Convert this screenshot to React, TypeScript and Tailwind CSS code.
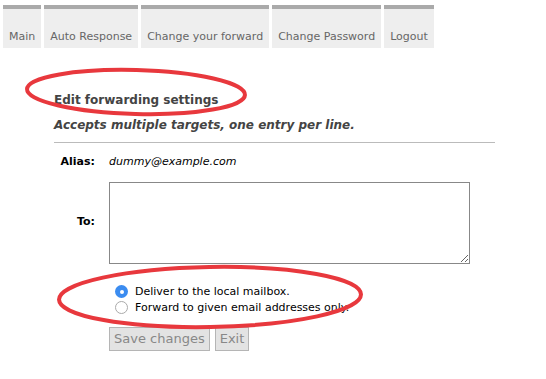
export default function App() {
  const tabs = ["Main", "Auto Response", "Change your forward", "Change Password", "Logout"];

  return (
    <div className="relative h-[379px] w-[546px] overflow-hidden bg-white font-['DejaVu_Sans',Verdana,sans-serif]">
      {/* Tabs */}
      <nav className="flex gap-[3px] pl-[3px] pt-[5px]">
        {tabs.map((t) => (
          <div
            key={t}
            className="flex h-[43px] items-end border-t-[4px] border-[#aaa] bg-[#eee] px-[6px] pb-[3px] text-[11px] text-[#666]"
          >
            {t}
          </div>
        ))}
      </nav>

      {/* Content */}
      <div className="ml-[54px] w-[441px] pt-[44px]">
        <h2 className="text-[12px] font-bold leading-[16px] text-[#444]">Edit forwarding settings</h2>
        <p className="mt-[9px] text-[12px] font-bold italic leading-[16px] text-[#444]">
          Accepts multiple targets, one entry per line.
        </p>
        <hr className="mt-[9px] border-t border-[#bbb]" />

        <div className="mt-[8px] grid grid-cols-[41px_1fr] items-center gap-x-[14px] text-[11px]">
          <div className="py-[3px] text-right font-bold text-black">Alias:</div>
          <div className="py-[3px] italic text-black">dummy@example.com</div>

          <div className="mt-[8px] text-right font-bold text-black">To:</div>
          <div className="mt-[8px]">
            <textarea className="block h-[82px] w-[361px] resize border border-[#888] bg-white" />
          </div>

          <div />
          <div className="mt-[20px] flex flex-col pl-[6px] leading-[16px] text-black">
            <label className="flex items-center gap-[7px]">
              <span className="flex h-[13px] w-[13px] items-center justify-center rounded-full bg-[#3b8cf0]">
                <span className="h-[4px] w-[4px] rounded-full bg-white" />
              </span>
              Deliver to the local mailbox.
            </label>
            <label className="flex items-center gap-[7px]">
              <span className="h-[13px] w-[13px] rounded-full border border-[#aaa] bg-white" />
              Forward to given email addresses only.
            </label>
          </div>

          <div />
          <div className="mt-[11px] flex gap-[5px]">
            <button className="h-[24px] border border-[#b5b5b5] bg-[#e3e3e3] px-[4px] text-[13px] text-[#888]">
              Save changes
            </button>
            <button className="h-[24px] border border-[#b5b5b5] bg-[#e3e3e3] px-[4px] text-[13px] text-[#888]">
              Exit
            </button>
          </div>
        </div>
      </div>

      {/* Red annotation ellipses */}
      <svg className="pointer-events-none absolute left-0 top-0" width="546" height="379">
        <ellipse cx="136" cy="92" rx="109" ry="22" fill="none" stroke="#e8383d" strokeWidth="4" transform="rotate(1.5 136 92)" />
        <ellipse cx="210" cy="297" rx="151" ry="30" fill="none" stroke="#e8383d" strokeWidth="4" transform="rotate(-1 210 297)" />
      </svg>
    </div>
  );
}
